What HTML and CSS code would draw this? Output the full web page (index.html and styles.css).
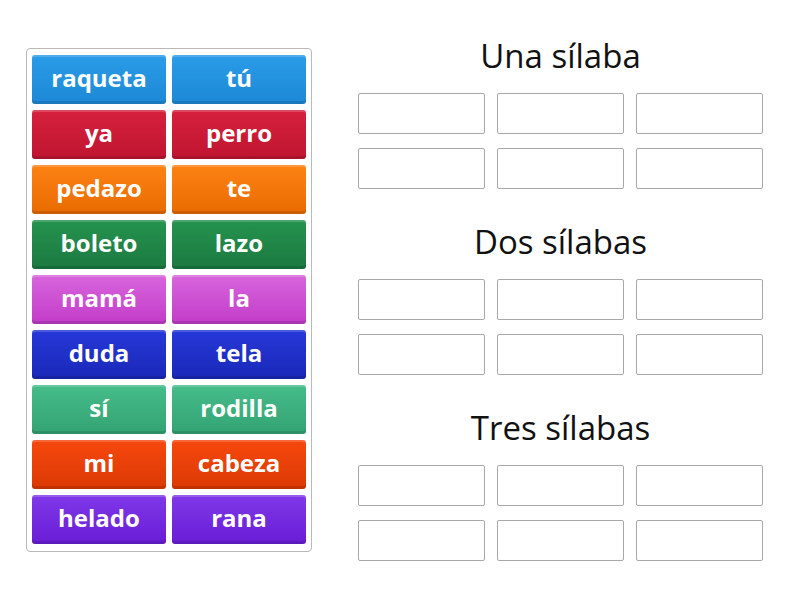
FILE: index.html
```html
<!DOCTYPE html>
<html lang="es">
<head>
  <meta charset="UTF-8">
  <meta name="viewport" content="width=device-width, initial-scale=1.0">
  <title>Sílabas</title>
  <link rel="stylesheet" href="styles.css">
</head>
<body>
  <div class="page">
    <!-- Fichas para arrastrar -->
    <div class="bank">
      <div class="tile blue">raqueta</div>
      <div class="tile blue">tú</div>
      <div class="tile red">ya</div>
      <div class="tile red">perro</div>
      <div class="tile orange">pedazo</div>
      <div class="tile orange">te</div>
      <div class="tile green">boleto</div>
      <div class="tile green">lazo</div>
      <div class="tile pink">mamá</div>
      <div class="tile pink">la</div>
      <div class="tile navy">duda</div>
      <div class="tile navy">tela</div>
      <div class="tile mint">sí</div>
      <div class="tile mint">rodilla</div>
      <div class="tile flame">mi</div>
      <div class="tile flame">cabeza</div>
      <div class="tile purple">helado</div>
      <div class="tile purple">rana</div>
    </div>

    <!-- Grupos -->
    <div class="groups">
      <div class="group">
        <h2>Una sílaba</h2>
        <div class="slots">
          <div class="slot"></div><div class="slot"></div><div class="slot"></div>
          <div class="slot"></div><div class="slot"></div><div class="slot"></div>
        </div>
      </div>
      <div class="group">
        <h2>Dos sílabas</h2>
        <div class="slots">
          <div class="slot"></div><div class="slot"></div><div class="slot"></div>
          <div class="slot"></div><div class="slot"></div><div class="slot"></div>
        </div>
      </div>
      <div class="group">
        <h2>Tres sílabas</h2>
        <div class="slots">
          <div class="slot"></div><div class="slot"></div><div class="slot"></div>
          <div class="slot"></div><div class="slot"></div><div class="slot"></div>
        </div>
      </div>
    </div>
  </div>
</body>
</html>
```

FILE: styles.css
```css
body {
  margin: 0;
  padding: 0;
  background: #fff;
  font-family: "Open Sans", "Liberation Sans", sans-serif;
}
.page {
  display: flex;
  align-items: flex-start;
}
.bank {
  margin: 48px 0 0 26px;
  width: 274px;
  padding: 6px 5px 7px 5px;
  border: 1px solid #b9b9b9;
  border-radius: 4px;
  display: grid;
  grid-template-columns: 134px 134px;
  grid-auto-rows: 49px;
  gap: 6px;
}
.tile {
  display: flex;
  align-items: center;
  justify-content: center;
  color: #fff;
  font-size: 24px;
  font-weight: 700;
  border-radius: 3px;
  padding-bottom: 4px;
  box-sizing: border-box;
  box-shadow: inset 0 2px 0 rgba(255, 255, 255, 0.18), inset 0 -3px 0 rgba(0, 0, 0, 0.12);
}
.blue   { background: linear-gradient(#2a9ce8, #1d88d6); }
.red    { background: linear-gradient(#d6213d, #bf1530); }
.orange { background: linear-gradient(#fd8214, #e86b00); }
.green  { background: linear-gradient(#25934f, #1b7940); }
.pink   { background: linear-gradient(#d865dd, #c23cc9); }
.navy   { background: linear-gradient(#2638d8, #1a28b8); }
.mint   { background: linear-gradient(#45bc89, #34a373); }
.flame  { background: linear-gradient(#f6480e, #db3904); }
.purple { background: linear-gradient(#7f38e8, #691dd6); }

/* Columna derecha con los grupos */
.groups {
  margin: 36px 0 0 46px;
  display: flex;
  flex-direction: column;
  gap: 33px;
}
.group h2 {
  margin: 0 0 17px 0;
  font-size: 33px;
  font-weight: 400;
  line-height: 40px;
  color: #111;
  text-align: center;
}
.slots {
  display: grid;
  grid-template-columns: repeat(3, 127px);
  grid-auto-rows: 41px;
  column-gap: 12px;
  row-gap: 14px;
}
.slot {
  border: 1px solid #a8a8a8;
  border-radius: 2px;
}
```
